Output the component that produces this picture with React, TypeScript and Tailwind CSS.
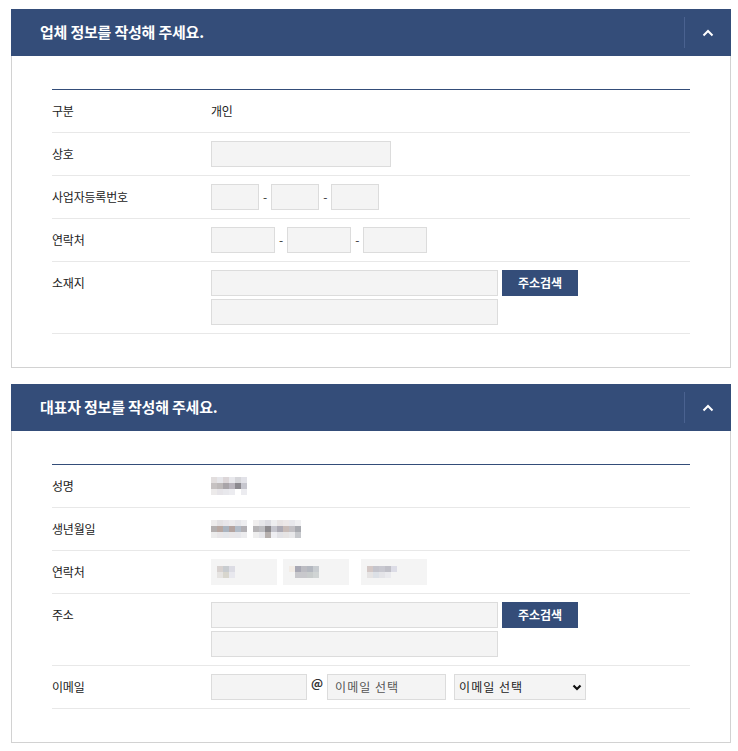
import type { ReactNode } from 'react';

interface PanelProps {
    readonly title: string;
    readonly children: ReactNode;
    readonly className?: string;
}

function Panel({ title, children, className = '' }: PanelProps) {
    return (
        <section className={`ml-[11px] w-[720px] ${className}`}>
            {/* Header */}
            <div className="flex h-[47px] items-center bg-[#344d79]">
                <h2 className="flex-1 pl-[29px] text-[15px] font-bold tracking-[-0.2px] text-white">{title}</h2>
                <button
                    className="flex h-[31px] w-[47px] items-center justify-center border-l border-[#4a6290]"
                    aria-label="Collapse"
                >
                    <svg width="12" height="8" viewBox="0 0 12 8" fill="none">
                        <path d="M1.5 6.5L6 2l4.5 4.5" stroke="#fff" strokeWidth="2" />
                    </svg>
                </button>
            </div>

            {/* Body */}
            <div className="border border-t-0 border-[#d2d2d2] px-[40px] py-[33px]">
                <div className="border-t border-[#344d79]">{children}</div>
            </div>
        </section>
    );
}

function Row({ label, children }: { readonly label: string; readonly children: ReactNode }) {
    return (
        <div className="flex border-b border-[#e8e8e8] py-2">
            <div className="w-[159px] shrink-0 text-[12px] leading-[26px] tracking-[-0.2px] text-[#222]">{label}</div>
            <div className="flex-1 text-[12px] leading-[26px] text-[#222]">{children}</div>
        </div>
    );
}

function Field({ className = '' }: { readonly className?: string }) {
    return <input className={`h-[26px] border border-[#dcdcdc] bg-[#f4f4f4] px-2 text-[12px] outline-none ${className}`} />;
}

function SearchButton() {
    return (
        <button className="ml-1 h-[26px] w-[76px] bg-[#344d79] text-[12px] font-bold text-white">주소검색</button>
    );
}

// pixelated (redacted) values
function Mosaic({ cells }: { readonly cells: string[][] }) {
    return (
        <div className="flex flex-col">
            {cells.map((row, i) => (
                <div key={i} className="flex">
                    {row.map((c, j) => (
                        <div key={j} className="h-[6px] w-[6px]" style={{ backgroundColor: c }} />
                    ))}
                </div>
            ))}
        </div>
    );
}

const nameCells = [
    ['#e2dede', '#e6e6ea', '#dcd6d8', '#e8e8ec', '#d6d6da', '#e2e2e8'],
    ['#c6c2c2', '#bebaba', '#a9a5a9', '#b9b5bd', '#8c8a90', '#c6c6ce'],
    ['#eceaea', '#e6e4e8', '#e8e8ec', '#ececf0', '#ffffff', '#ececf0'],
];

const birthCellsA = [
    ['#eeecec', '#e4e2e4', '#e8e6ea', '#ecebed', '#e6e6ea', '#eeeef0'],
    ['#b4b0b0', '#b8a8a2', '#aab4c0', '#b4a4a0', '#b2bcc8', '#b2b0b4'],
    ['#ececec', '#e8e6e8', '#e4e6ea', '#e8e6e8', '#e6e6ea', '#ececee'],
];

const birthCellsB = [
    ['#f0eeee', '#e6e6ea', '#dcdce2', '#eeeef0', '#e8e4e4', '#ece8e8', '#e8e8ec', '#f0f0f2'],
    ['#b6b4b6', '#bcbcc0', '#8c8a8e', '#c4c4cc', '#acaab4', '#c8bcb8', '#c2c0c4', '#a8aab0'],
    ['#eeeeee', '#e6e6ea', '#b6b0ae', '#eeeef2', '#e2e2e6', '#e6e4e4', '#e8e8ea', '#c6c8cc'],
];

const phoneCellsA = [
    ['#d8d2d0', '#c8ccd0', '#dcdce4', '#f4f4f4'],
    ['#e6e4e2', '#d8d6ce', '#e8e8ee', '#f4f4f4'],
];

const phoneCellsB = [
    ['#f2ece6', '#a8a8b4', '#bcbcc2', '#b4b8c0', '#c8ccd0'],
    ['#f4f4f4', '#c8c8cc', '#c8c8cc', '#c8cccc', '#d0d4d4'],
];

const phoneCellsC = [
    ['#d4c8c6', '#c4c4cc', '#c8c8d0', '#c0c0c8', '#dcdce6'],
    ['#e6e4e4', '#dce0e6', '#e4e4e8', '#eaeaee', '#f4f4f4'],
];

function BlurBox({ cells, className = '' }: { readonly cells: string[][]; readonly className?: string }) {
    return (
        <div className={`flex h-[26px] items-center bg-[#f4f4f4] px-[6px] ${className}`}>
            <Mosaic cells={cells} />
        </div>
    );
}

function Dash() {
    return <span className="mx-[4px] text-[12px] text-[#333]">-</span>;
}

export default function App() {
    return (
        <div className="min-h-[751px] bg-white pt-[9px] font-['Noto_Sans_CJK_KR',sans-serif] text-[#333]">
            {/* Company */}
            <Panel title="업체 정보를 작성해 주세요.">
                <Row label="구분">
                    <span className="tracking-[-0.2px]">개인</span>
                </Row>
                <Row label="상호">
                    <Field className="block w-[180px]" />
                </Row>
                <Row label="사업자등록번호">
                    <div className="flex items-center">
                        <Field className="w-[48px]" />
                        <Dash />
                        <Field className="w-[48px]" />
                        <Dash />
                        <Field className="w-[48px]" />
                    </div>
                </Row>
                <Row label="연락처">
                    <div className="flex items-center">
                        <Field className="w-[64px]" />
                        <Dash />
                        <Field className="w-[64px]" />
                        <Dash />
                        <Field className="w-[64px]" />
                    </div>
                </Row>
                <Row label="소재지">
                    <div className="flex flex-col gap-[3px]">
                        <div className="flex">
                            <Field className="w-[287px]" />
                            <SearchButton />
                        </div>
                        <Field className="w-[287px]" />
                    </div>
                </Row>
            </Panel>

            {/* Representative */}
            <Panel title="대표자 정보를 작성해 주세요." className="mt-[16px]">
                <Row label="성명">
                    <div className="flex h-[26px] items-center">
                        <Mosaic cells={nameCells} />
                    </div>
                </Row>
                <Row label="생년월일">
                    <div className="flex h-[26px] items-center gap-[6px]">
                        <Mosaic cells={birthCellsA} />
                        <Mosaic cells={birthCellsB} />
                    </div>
                </Row>
                <Row label="연락처">
                    <div className="flex items-center">
                        <BlurBox cells={phoneCellsA} className="w-[66px]" />
                        <div className="w-[6px]" />
                        <BlurBox cells={phoneCellsB} className="w-[66px]" />
                        <div className="w-[12px]" />
                        <BlurBox cells={phoneCellsC} className="w-[66px]" />
                    </div>
                </Row>
                <Row label="주소">
                    <div className="flex flex-col gap-[3px]">
                        <div className="flex">
                            <Field className="w-[287px]" />
                            <SearchButton />
                        </div>
                        <Field className="w-[287px]" />
                    </div>
                </Row>
                <Row label="이메일">
                    <div className="flex items-center">
                        <Field className="w-[96px]" />
                        <span className="mx-[4px] -mt-[8px] text-[12px] font-bold text-[#333]">@</span>
                        <div className="flex h-[26px] w-[119px] items-center border border-[#dcdcdc] bg-[#f4f4f4] pl-[7px] text-[12px] tracking-[1px] text-[#555]">
                            이메일 선택
                        </div>
                        <div className="ml-[8px] flex h-[26px] w-[132px] items-center justify-between border border-[#dcdcdc] bg-[#f4f4f4] pl-[4px] pr-[3px] text-[12px] tracking-[1px] text-[#222]">
                            <span>이메일 선택</span>
                            <svg width="10" height="7" viewBox="0 0 10 7" fill="none">
                                <path d="M1.5 1.5L5 5l3.5-3.5" stroke="#111" strokeWidth="2.2" />
                            </svg>
                        </div>
                    </div>
                </Row>
            </Panel>
        </div>
    );
}
